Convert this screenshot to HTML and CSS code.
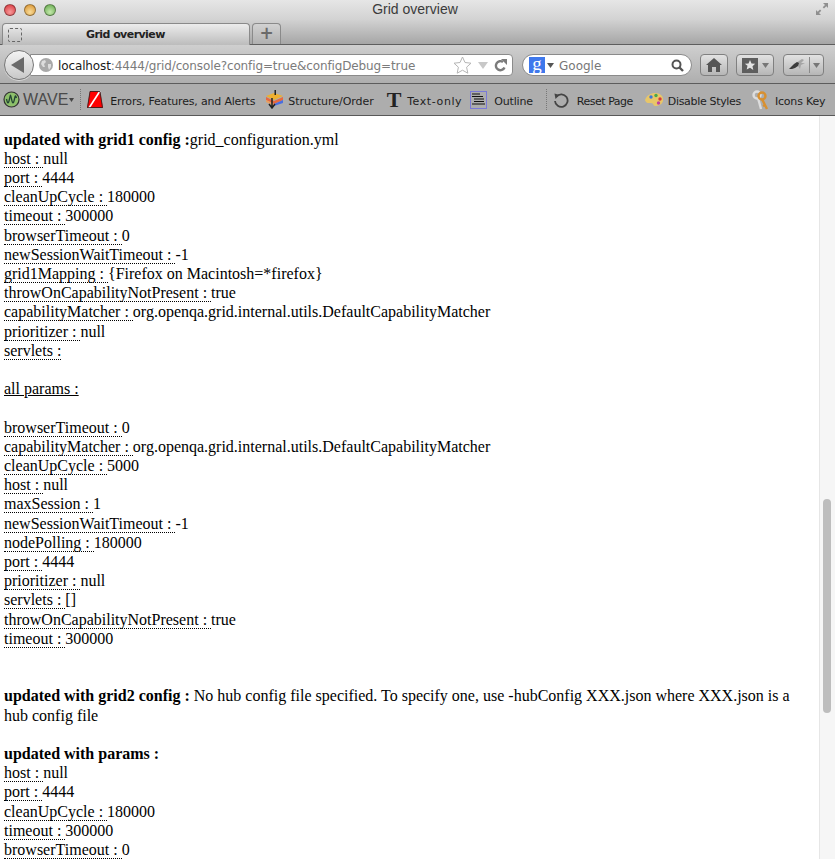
FILE: index.html
```html
<!DOCTYPE html>
<html lang="en">
<head>
<meta charset="utf-8">
<title>Grid overview</title>
<link rel="stylesheet" href="styles.css">
</head>
<body>
<div class="chrome">
  <div class="titlebar">
    <div class="lights"><i class="light red"></i><i class="light amber"></i><i class="light green"></i></div>
    <div class="wintitle">Grid overview</div>
    <svg class="fs" width="14" height="14" viewBox="0 0 14 14"><path d="M8 1h5v5l-1.700-1.700-2.300 2.300-1.300-1.300 2.300-2.300zM6 13H1V8l1.700 1.700 2.300-2.300 1.300 1.300-2.300 2.300z" fill="#8f8f8f"/></svg>
  </div>
  <div class="tabbar">
    <div class="tab"><i class="favicon"></i><span class="tabtext">Grid overview</span></div>
    <div class="newtab">+</div>
  </div>
  <div class="navbar">
    <div class="back"><svg width="14" height="16" viewBox="0 0 14 16"><path d="M13 0v16L0 8z" fill="#6a6a6a"/></svg></div>
    <div class="urlbar">
      <svg class="globe" width="14" height="14" viewBox="0 0 14 14"><circle cx="7" cy="7" r="7" fill="#a9a9a9"/><path d="M3 3l3-1 1 2-2 2 1 3-2 0-2-3zM9 6l3 0 0 3-2 3-1-3z" fill="#dcdcdc"/></svg>
      <span class="url"><b>localhost</b>:4444/grid/console?config=true&amp;configDebug=true</span>
      <svg class="star" width="19" height="18" viewBox="0 0 19 18"><path d="M9.500 1l2.500 5.500 6 .7-4.400 4 1.200 6-5.300-3-5.300 3 1.200-6-4.400-4 6-.7z" fill="#fff" stroke="#b5b5b5"/></svg>
      <svg class="drop" width="10" height="7" viewBox="0 0 10 7"><path d="M0 0h10L5 7z" fill="#c8c8c8"/></svg>
      <svg class="reload" width="13" height="13" viewBox="0 0 13 13"><path d="M10.500 8.500A4.500 4.500 0 1 1 9 3" fill="none" stroke="#7b7b7b" stroke-width="2.400"/><path d="M7 0h6v6z" fill="#7b7b7b"/></svg>
    </div>
    <div class="search">
      <span class="gicon">g</span>
      <svg width="7" height="5" viewBox="0 0 7 5"><path d="M0 0h7L3.500 5z" fill="#555"/></svg>
      <span class="searchtext">Google</span>
      <svg class="lens" width="13" height="13" viewBox="0 0 13 13"><circle cx="5.500" cy="5.500" r="4" fill="none" stroke="#555" stroke-width="2"/><path d="M8.500 8.500l3.500 3.500" stroke="#555" stroke-width="2.400"/></svg>
    </div>
    <div class="tbtn home"><svg width="16" height="14" viewBox="0 0 16 14"><path d="M8 0l8 7h-2v7H10V9H6v5H2V7H0z" fill="#555"/></svg></div>
    <div class="tbtn marks"><span class="bookmark"><svg width="12" height="12" viewBox="0 0 12 12"><path d="M6 1l1.500 3.400 3.700.4-2.700 2.500.8 3.700L6 8.800l-3.300 1.700.8-3.700L.8 4.800l3.700-.4z" fill="#e4e4e4"/></svg></span><svg width="7" height="5" viewBox="0 0 7 5"><path d="M0 0h7L3.500 5z" fill="#777"/></svg></div>
    <div class="tbtn ext"><svg width="18" height="14" viewBox="0 0 18 14"><path d="M8 5l6-4 2 1-3 3 4 0-4 2-1 4-2-3z" fill="#a5a5a5"/><path d="M1 11l5-5 3-2 2 1-1 3-3 2-3 1z" fill="#3c3c3c"/></svg><i class="sep"></i><svg width="7" height="5" viewBox="0 0 7 5"><path d="M0 0h7L3.500 5z" fill="#777"/></svg></div>
  </div>
  <div class="wavebar">
    <svg class="wlogo" width="17" height="17" viewBox="0 0 17 17"><circle cx="8.500" cy="8.500" r="7.500" fill="#8dc06b" stroke="#333" stroke-width="1.200"/><path d="M3.500 8c1 5 2 5 3 0s1-5 2 0 2 5 3 0 1-3 2-1" fill="none" stroke="#243" stroke-width="1.300"/></svg>
    <span class="wave">WAVE</span>
    <svg class="wavedrop" width="5" height="4" viewBox="0 0 5 4"><path d="M0 0h5L2.500 4z" fill="#444"/></svg>
    <i class="dots first"></i>
    <span class="witem errors"><svg width="16" height="17" viewBox="0 0 16 17"><path d="M3 0h10l3 17H0z" fill="#f00"/><path d="M1 17 12 0h2L3 17z" fill="#fff"/><path d="M3 .5h10l2.500 16H.5z" fill="none" stroke="#222" stroke-width=".8"/></svg><span>Errors, Features, and Alerts</span></span>
    <span class="witem structure"><svg width="19" height="19" viewBox="0 0 19 19"><path d="M1 6l8-3 9 3-9 4z" fill="#eeb030"/><path d="M1 7l8 4 9-4v3l-9 4-8-4z" fill="#e8683f"/><path d="M9 14l9-4v3l-9 3z" fill="#4a6ee0"/><path d="M1 10l8 4v2l-8-4z" fill="#e8a060"/><path d="M7 8v9M4 14l3 4 3-4" fill="none" stroke="#222" stroke-width="1.500"/><path d="M9.500 0h1.500v5H9.500z" fill="#222"/></svg><span>Structure/Order</span></span>
    <span class="witem textonly"><span class="bigt">T</span><span class="textonly-label">Text-only</span></span>
    <span class="witem outline"><span class="outlineicon"><svg width="15" height="15" viewBox="0 0 15 15"><path d="M1 2h8M1 4.500h11M3 7h10M3 9.500h10M1 12h13" stroke="#111" stroke-width="1.200"/></svg></span><span>Outline</span></span>
    <i class="dots second"></i>
    <span class="witem reset"><svg width="16" height="16" viewBox="0 0 16 16"><path d="M3.500 4.500A6.300 6.300 0 1 1 2 9" fill="none" stroke="#444" stroke-width="1.800"/><path d="M1.500 1.500l5 1.500-4 4z" fill="#444"/></svg><span>Reset Page</span></span>
    <span class="witem disable"><svg width="19" height="15" viewBox="0 0 19 15"><path d="M0 8C2 3 6 1 10 1c5 0 9 3 8 8-1 4-5 5-8 5-2 0-1-3-4-3-2 0-5 1-6-3z" fill="#e8c668"/><circle cx="6" cy="5" r="1.700" fill="#3c77d8"/><circle cx="11" cy="3.500" r="1.700" fill="#4aa84a"/><circle cx="15" cy="7" r="1.700" fill="#d83a3a"/><circle cx="13.500" cy="11" r="1.700" fill="#c040a0"/></svg><span>Disable Styles</span></span>
    <span class="witem keys"><svg width="17" height="20" viewBox="0 0 17 20"><circle cx="5" cy="5" r="3.500" fill="none" stroke="#ddd" stroke-width="2.400"/><path d="M6 8l3 11" stroke="#ddd" stroke-width="2.400"/><circle cx="10" cy="6" r="3.500" fill="none" stroke="#d89030" stroke-width="2.400"/><path d="M10 9l5 10M13 15l-2 1" stroke="#d89030" stroke-width="2.400"/></svg><span>Icons Key</span></span>
  </div>
</div>
<div class="viewport">
  <main class="page">
    <div><b>updated with grid1 config :</b>grid_configuration.yml</div>
    <div><span class="k">host : </span>null</div>
    <div><span class="k">port : </span>4444</div>
    <div><span class="k">cleanUpCycle : </span>180000</div>
    <div><span class="k">timeout : </span>300000</div>
    <div><span class="k">browserTimeout : </span>0</div>
    <div><span class="k">newSessionWaitTimeout : </span>-1</div>
    <div><span class="k">grid1Mapping : </span>{Firefox on Macintosh=*firefox}</div>
    <div><span class="k">throwOnCapabilityNotPresent : </span>true</div>
    <div><span class="k">capabilityMatcher : </span>org.openqa.grid.internal.utils.DefaultCapabilityMatcher</div>
    <div><span class="k">prioritizer : </span>null</div>
    <div><span class="k">servlets : </span></div>
    <div class="blank"></div>
    <div><u>all params :</u></div>
    <div class="blank"></div>
    <div><span class="k">browserTimeout : </span>0</div>
    <div><span class="k">capabilityMatcher : </span>org.openqa.grid.internal.utils.DefaultCapabilityMatcher</div>
    <div><span class="k">cleanUpCycle : </span>5000</div>
    <div><span class="k">host : </span>null</div>
    <div><span class="k">maxSession : </span>1</div>
    <div><span class="k">newSessionWaitTimeout : </span>-1</div>
    <div><span class="k">nodePolling : </span>180000</div>
    <div><span class="k">port : </span>4444</div>
    <div><span class="k">prioritizer : </span>null</div>
    <div><span class="k">servlets : </span>[]</div>
    <div><span class="k">throwOnCapabilityNotPresent : </span>true</div>
    <div><span class="k">timeout : </span>300000</div>
    <div class="blank"></div>
    <div class="blank"></div>
    <div><b>updated with grid2 config : </b>No hub config file specified. To specify one, use -hubConfig XXX.json where XXX.json is a hub config file</div>
    <div class="blank"></div>
    <div><b>updated with params :</b></div>
    <div><span class="k">host : </span>null</div>
    <div><span class="k">port : </span>4444</div>
    <div><span class="k">cleanUpCycle : </span>180000</div>
    <div><span class="k">timeout : </span>300000</div>
    <div><span class="k">browserTimeout : </span>0</div>
  </main>
  <div class="scrollbar"><i class="thumb"></i></div>
</div>
</body>
</html>
```

FILE: styles.css
```css
* { box-sizing: border-box; }
html, body { margin: 0; padding: 0; height: 859px; overflow: hidden; background: #fff; }
body { display: flex; flex-direction: column; width: 835px; }
i { display: block; }

.chrome { flex: none; font-family: "DejaVu Sans", sans-serif; color: #222; }
.titlebar { height: 20px; background: linear-gradient(#e6e6e6, #d2d2d2); display: flex; align-items: center; padding: 0 6px 0 4px; position: relative; }
.lights { display: flex; gap: 8px; }
.light { width: 12px; height: 12px; border-radius: 50%; border: 1px solid rgba(0,0,0,.35); }
.red { background: radial-gradient(circle at 50% 70%, #f79a9a, #d8333a); }
.amber { background: radial-gradient(circle at 50% 70%, #f8dc9a, #d8902a); }
.green { background: radial-gradient(circle at 50% 70%, #c4e8ac, #62a84a); }
.wintitle { position: absolute; left: 0; right: 5px; top: 0; text-align: center; font: 14px/18px "Liberation Sans", sans-serif; color: #3b3b3b; }
.fs { margin-left: auto; margin-top: -3px; }

.tabbar { height: 25px; background: linear-gradient(#d1d1d1, #a6a6a6); border-bottom: 1px solid #5e5e5e; display: flex; align-items: flex-end; padding-left: 2px; gap: 2px; }
.tab { width: 248px; height: 22px; margin-bottom: -1px; border: 1px solid #8a8a8a; border-bottom: 0; border-radius: 4px 4px 0 0; background: linear-gradient(#ececec, #bcbcbc); display: flex; align-items: center; position: relative; z-index: 1; }
.favicon { width: 14px; height: 14px; margin-left: 5px; border: 1px dashed #666; border-radius: 2px; }
.tabtext { margin-left: 64px; white-space: nowrap; font: bold 11px "DejaVu Sans", sans-serif; color: #222; letter-spacing: -.56px; }
.newtab { width: 29px; height: 21px; border: 1px solid #8a8a8a; border-bottom: 0; border-radius: 4px 4px 0 0; background: linear-gradient(#d2d2d2, #b0b0b0); text-align: center; font: bold 17px/19px "DejaVu Sans", sans-serif; color: #6a6a6a; }

.navbar { height: 39px; background: linear-gradient(#cfcfcf, #aeaeae); border-bottom: 1px solid #5c5c5c; display: flex; align-items: center; padding: 2px 0 0 4px; position: relative; }
.back { width: 30px; height: 30px; flex: none; border-radius: 50%; border: 1px solid #777; background: linear-gradient(#f4f4f4, #c8c8c8); display: flex; align-items: center; justify-content: center; position: relative; z-index: 1; padding-right: 3px; box-shadow: 0 1px 0 rgba(255,255,255,.5); }
.urlbar { width: 483px; height: 22px; margin-left: -4px; border: 1px solid #8b8b8b; border-radius: 0 4px 4px 0; background: #fff; display: flex; align-items: center; padding-left: 8px; flex: none; }
.globe { flex: none; }
.url { margin-left: 5px; margin-top: 2px; width: 393px; flex: none; white-space: nowrap; font: 12px "DejaVu Sans", sans-serif; letter-spacing: -.12px; color: #7b7b7b; }
.url b { font-weight: normal; color: #1a1a1a; }
.star { margin-left: 2px; flex: none; }
.drop { margin-left: 6px; flex: none; }
.reload { margin-left: 6px; flex: none; }
.search { width: 170px; height: 22px; margin-left: 9px; flex: none; border: 1px solid #8b8b8b; border-radius: 11px; background: #fff; display: flex; align-items: center; padding-left: 6px; overflow: hidden; gap: 2px; }
.gicon { width: 16px; height: 16px; flex: none; background: #3f78ec; color: #fff; text-align: center; font: 19px/13px "Liberation Serif", serif; }
.searchtext { margin-left: 3px; margin-top: 2px; font: 12px "DejaVu Sans", sans-serif; color: #777; }
.lens { margin-left: auto; margin-right: 7px; }
.tbtn { height: 22px; flex: none; border: 1px solid #808080; border-radius: 4px; background: linear-gradient(#e2e2e2, #b6b6b6); display: flex; align-items: center; justify-content: center; }
.home { width: 28px; margin-left: 8px; }
.marks { width: 38px; margin-left: 8px; gap: 4px; }
.bookmark { width: 16px; height: 15px; background: #5e5e5e; display: flex; align-items: center; justify-content: center; }
.ext { width: 41px; margin-left: 9px; gap: 3px; }
.sep { width: 1px; height: 16px; background: #8a8a8a; }

.wavebar { height: 32px; background: #adadad; border-bottom: 1px solid #585858; display: flex; align-items: center; padding: 4px 0 0 3px; font: 11px "DejaVu Sans", sans-serif; letter-spacing: -.18px; color: #1d1d1d; }
.wlogo { flex: none; margin-top: -4px; }
.wave { margin-left: 3px; margin-top: -4px; font: 16px "Liberation Sans", sans-serif; letter-spacing: 0; color: #4a4a4a; }
.wavedrop { margin-left: 1px; margin-top: -4px; flex: none; }
.dots { width: 0; height: 21px; margin-top: -4px; border-left: 1px dotted #777; flex: none; }
.dots.first { margin-left: 6px; }
.dots.second { margin-left: 13px; }
.witem { display: flex; align-items: center; flex: none; white-space: nowrap; }
.witem svg, .outlineicon, .bigt { margin-top: -4px; }
.errors { margin-left: 6px; gap: 7px; }
.structure { margin-left: 10px; gap: 4px; letter-spacing: -.05px; }
.textonly { margin-left: 13px; gap: 6px; }
.textonly-label { letter-spacing: .6px; }
.bigt { font: bold 22px/22px "Liberation Serif", serif; color: #222; }
.outline { margin-left: 8px; gap: 7px; }
.outlineicon { width: 17px; height: 18px; border: 1px solid #7a7ad8; display: flex; align-items: center; justify-content: center; }
.outlineicon svg { margin-top: 0; }
.reset { margin-left: 6px; gap: 8px; letter-spacing: -.48px; }
.disable { margin-left: 12px; gap: 4px; letter-spacing: -.33px; }
.keys { margin-left: 11px; gap: 6px; }

.viewport { flex: 1; min-height: 0; display: flex; position: relative; overflow: hidden; }
.page { flex: 1; min-width: 0; padding: 13.6px 8px 0 4px; font: 16px/19.2px "Liberation Serif", serif; color: #000; overflow: hidden; }
.blank { height: 19.2px; }
.k { border-bottom: 1px dotted #000; }
.scrollbar { width: 16px; flex: none; background: #f6f6f6; border-left: 1px solid #e6e6e6; position: relative; }
.thumb { position: absolute; left: 3px; right: 4px; top: 383px; height: 214px; border-radius: 4px; background: #bdbdbd; }
```
